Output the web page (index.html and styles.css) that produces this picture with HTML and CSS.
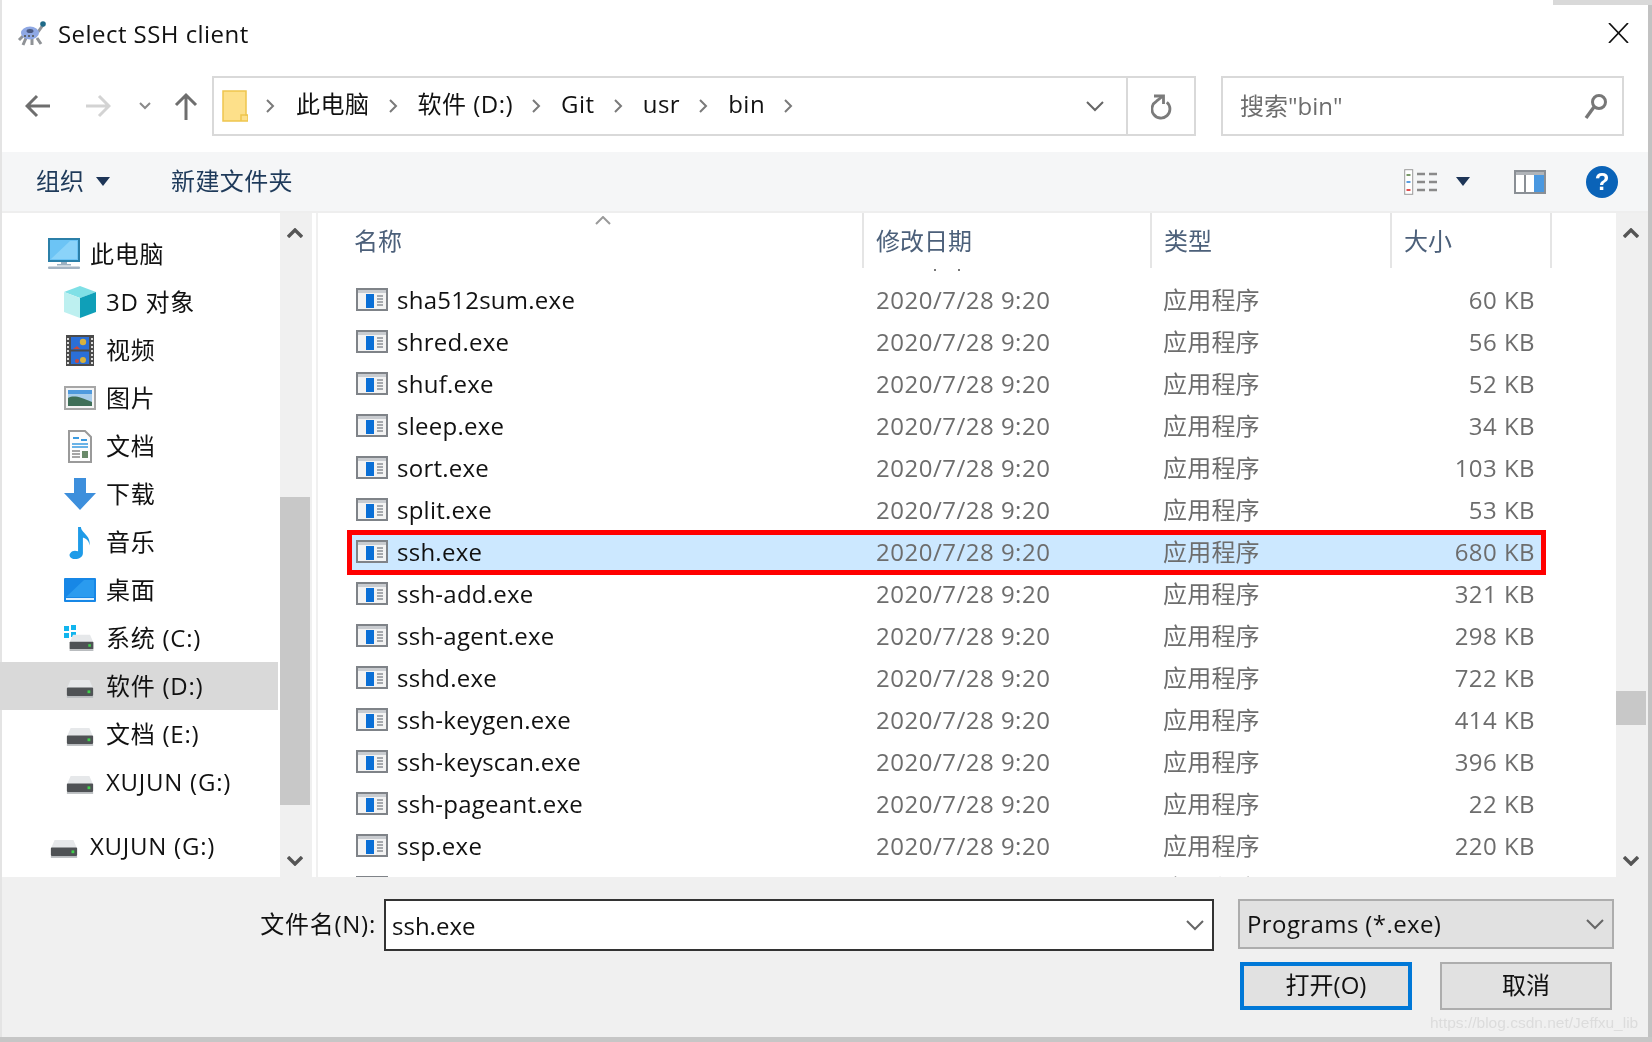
FILE: index.html
```html
<!DOCTYPE html>
<html lang="zh-CN">
<head>
<meta charset="utf-8">
<title>Select SSH client</title>
<link rel="stylesheet" href="styles.css">
</head>
<body>
<svg class="sprite" aria-hidden="true">
  <symbol id="i-exe" viewBox="0 0 32 23">
    <rect x="1" y="1" width="30" height="21" fill="#f3f3f3" stroke="#7f8388" stroke-width="2"/>
    <rect x="2" y="2" width="28" height="3" fill="#c9ccd0"/>
    <rect x="10" y="6" width="8" height="14" fill="#0a6fd6"/>
    <path d="M21 8h6M21 11h6M21 14h6M21 17h6" stroke="#8d9197" stroke-width="1.6"/>
  </symbol>
  <symbol id="i-drive" viewBox="0 0 32 20">
    <path d="M6 1h20l4 9H2z" fill="#e6e8ea"/>
    <rect x="2" y="9" width="28" height="9" rx="1" fill="#4f5255"/>
    <rect x="2" y="18" width="28" height="2" fill="#b9bcbf"/>
    <rect x="24" y="12" width="3" height="3" fill="#3fd24b"/>
  </symbol>
  <symbol id="i-chev" viewBox="0 0 10 16">
    <path d="M2 2l6 6-6 6" fill="none" stroke="#7a7a7a" stroke-width="2"/>
  </symbol>
  <symbol id="i-down" viewBox="0 0 20 12">
    <path d="M2 2l8 8 8-8" fill="none" stroke="#666" stroke-width="2"/>
  </symbol>
  <symbol id="i-caret" viewBox="0 0 14 9">
    <path d="M0 0h14l-7 9z" fill="#1d3557"/>
  </symbol>
  <symbol id="i-sb" viewBox="0 0 16 10">
    <path d="M1 9l7-7 7 7" fill="none" stroke="#555" stroke-width="3.4"/>
  </symbol>
</svg>

<div class="window">
  <header class="titlebar">
    <svg class="app-icon" viewBox="0 0 30 26">
      <path d="M6 16L2 20M9 18l-3 7M15 19v6M20 18l4 6M21 12l5-7" stroke="#8f9296" stroke-width="3" fill="none"/>
      <ellipse cx="13" cy="13" rx="9" ry="6.500" fill="#8fa8e4"/>
      <path d="M7 16h12" stroke="#5f6670" stroke-width="2" stroke-dasharray="2 2"/>
      <ellipse cx="13" cy="11" rx="3.500" ry="2" fill="#4b5a80"/>
      <circle cx="26" cy="4" r="2.800" fill="#1e6a88"/>
    </svg>
    <span class="title">Select SSH client</span>
    <svg class="close" viewBox="0 0 21 20"><path d="M1 0l19 20M20 0L1 20" stroke="#111" stroke-width="1.7"/></svg>
  </header>

  <div class="addressrow">
    <div class="navbtns">
      <svg class="nb nb-back" viewBox="0 0 26 24"><path d="M25 12H3M12 2L2 12l10 10" fill="none" stroke="#6e6e6e" stroke-width="3"/></svg>
      <svg class="nb nb-fwd" viewBox="0 0 26 24"><path d="M1 12h22M14 2l10 10-10 10" fill="none" stroke="#d3d3d3" stroke-width="3"/></svg>
      <svg class="nb nb-drop" viewBox="0 0 14 10"><path d="M2 2l5 5 5-5" fill="none" stroke="#8a8a8a" stroke-width="2"/></svg>
      <svg class="nb nb-up" viewBox="0 0 24 28"><path d="M12 28V3M2 13L12 3l10 10" fill="none" stroke="#6e6e6e" stroke-width="3"/></svg>
    </div>
    <div class="address">
      <svg class="folder" viewBox="0 0 26 32"><path d="M1 1h23v24h2v6H1z" fill="#fde08a" stroke="#eec54e" stroke-width="1.5"/><path d="M19 31v-6h6" fill="none" stroke="#eec54e" stroke-width="1.5"/></svg>
      <ol class="crumbs">
        <li class="crumb"><svg class="chev"><use href="#i-chev"/></svg></li>
        <li class="crumb"><span>此电脑</span><svg class="chev"><use href="#i-chev"/></svg></li>
        <li class="crumb"><span>软件 (D:)</span><svg class="chev"><use href="#i-chev"/></svg></li>
        <li class="crumb"><span>Git</span><svg class="chev"><use href="#i-chev"/></svg></li>
        <li class="crumb"><span>usr</span><svg class="chev"><use href="#i-chev"/></svg></li>
        <li class="crumb"><span>bin</span><svg class="chev"><use href="#i-chev"/></svg></li>
      </ol>
      <svg class="addr-drop"><use href="#i-down"/></svg>
      <div class="refresh">
        <svg viewBox="0 0 22 28"><path d="M15.800 10.200A9 9 0 1 1 5.500 9.200L12 4" fill="none" stroke="#7b7b7b" stroke-width="2.800"/><path d="M3 4h9.500v8" fill="none" stroke="#7b7b7b" stroke-width="2.800"/></svg>
      </div>
    </div>
    <div class="search">
      <span>搜索"bin"</span>
      <svg viewBox="0 0 24 26"><circle cx="15" cy="9" r="6.500" fill="none" stroke="#777" stroke-width="3"/><path d="M10 14L2 25" stroke="#777" stroke-width="3.400"/></svg>
    </div>
  </div>

  <div class="toolbar">
    <span class="tool">组织<svg class="caret"><use href="#i-caret"/></svg></span>
    <span class="tool tool-new">新建文件夹</span>
    <span class="spacer"></span>
    <svg class="view-icon" viewBox="0 0 33 26">
      <rect x=".7" y=".7" width="8" height="24.600" fill="#fff" stroke="#9a9a9a"/>
      <path d="M2.500 6h4" stroke="#7a9a6a" stroke-width="2"/><path d="M2.500 13h4" stroke="#5a9ee0" stroke-width="2"/><path d="M2.500 21h4" stroke="#e05050" stroke-width="2"/>
      <path d="M13 5h8M25 5h8M13 13h8M25 13h8M13 21h8M25 21h8" stroke="#8a8a8a" stroke-width="2.400"/>
    </svg>
    <svg class="caret caret-view"><use href="#i-caret"/></svg>
    <svg class="pane-icon" viewBox="0 0 32 24">
      <rect x="1" y="1" width="30" height="22" fill="#fff" stroke="#8a8f95" stroke-width="2"/>
      <rect x="20" y="4" width="10" height="18" fill="#4a98e0"/>
      <rect x="10" y="2" width="2" height="20" fill="#8a8f95"/>
      <rect x="2" y="2" width="28" height="3" fill="#b0b4b9"/>
    </svg>
    <span class="help">?</span>
  </div>

  <div class="browser">
    <nav class="navpane">
      <div class="navscroll">
        <ul class="navlist">
          <li class="navitem top"><svg class="nav-icon" viewBox="0 0 32 30"><rect x="1" y="0" width="30" height="22" fill="#6cc4f5" stroke="#2b7fa8" stroke-width="2"/><path d="M3 20L22 2h7v18z" fill="#8ad3f9"/><rect x="13" y="23" width="6" height="2" fill="#9bb0c0"/><rect x="9" y="25" width="14" height="1.500" fill="#9bb0c0"/><rect x="0" y="27.500" width="32" height="2.500" rx="1" fill="#a3b3c2"/></svg><span>此电脑</span></li>
          <li class="navitem"><svg class="nav-icon" viewBox="0 0 32 32"><path d="M16 0l16 6-16 6L0 6z" fill="#7fe0e6"/><path d="M0 6l16 6v20L0 26z" fill="#bdf0f0"/><path d="M32 6l-16 6v20l16-6z" fill="#0f9fb8"/></svg><span>3D 对象</span></li>
          <li class="navitem"><svg class="nav-icon nav-video" viewBox="0 0 28 31"><rect width="28" height="31" fill="#4b4b4b"/><rect x="5" y="2" width="18" height="12.500" fill="#2a6fd8"/><rect x="5" y="16.500" width="18" height="12.500" fill="#2a6fd8"/><path d="M2 3v26M26 3v26" stroke="#ddd" stroke-width="2" stroke-dasharray="2 2"/><circle cx="17" cy="7" r="3.200" fill="#d8b23c"/><path d="M7 14l4-3 3 3z" fill="#c94a3a"/><circle cx="17" cy="25" r="3" fill="#d8b23c"/><circle cx="11" cy="26" r="2" fill="#c94a3a"/></svg><span>视频</span></li>
          <li class="navitem"><svg class="nav-icon" viewBox="0 0 32 24"><rect x="1" y="1" width="30" height="22" fill="#f5f5f5" stroke="#a6a6a6" stroke-width="2"/><rect x="4" y="4" width="24" height="16" fill="#a9cdea"/><rect x="4" y="4" width="24" height="4" fill="#4f9ade"/><path d="M4 12c6-3 12-1 24 4v4H4z" fill="#3f6f58"/></svg><span>图片</span></li>
          <li class="navitem"><svg class="nav-icon nav-doc" viewBox="0 0 24 33"><path d="M1 1h16l6 6v25H1z" fill="#fdfdfd" stroke="#9a9a9a" stroke-width="2"/><path d="M5 8h6M13 10h6" stroke="#3a9ae0" stroke-width="2"/><path d="M4 14h16M4 17h16" stroke="#3a9ae0" stroke-width="1.500"/><path d="M4 21h8M4 24h8M4 27h8" stroke="#888" stroke-width="1.500"/><rect x="14" y="21" width="6" height="7" fill="#6a8a6a"/></svg><span>文档</span></li>
          <li class="navitem"><svg class="nav-icon" viewBox="0 0 32 32"><path d="M10 0h12v15h10L16 32 0 15h10z" fill="#3d8fdc"/></svg><span>下载</span></li>
          <li class="navitem"><svg class="nav-icon nav-doc" viewBox="0 0 24 34"><path d="M13 1c0 6 10 8 9 19-1-6-5-8-7-8v16c0 4-4 6-8 6-5 0-7-4-5-6 2-3 5-3 8-2V1z" fill="#1e9be8"/></svg><span>音乐</span></li>
          <li class="navitem"><svg class="nav-icon" viewBox="0 0 32 24"><rect width="32" height="24" rx="1" fill="#1787e6"/><path d="M2 19L20 2h10v17z" fill="#2a9bef"/><rect x="2" y="20" width="28" height="2" fill="#dff0fd"/></svg><span>桌面</span></li>
          <li class="navitem"><svg class="nav-icon nav-sys" viewBox="0 0 32 26"><path d="M0 1h5v5H0zM7 0h5v5H7zM0 8h5v5H0zM7 7h5v5H7z" fill="#12b5ee"/><use href="#i-drive" x="3" y="9" width="29" height="17"/></svg><span>系统 (C:)</span></li>
          <li class="navitem selected"><svg class="nav-icon nav-drive"><use href="#i-drive"/></svg><span>软件 (D:)</span></li>
          <li class="navitem"><svg class="nav-icon nav-drive"><use href="#i-drive"/></svg><span>文档 (E:)</span></li>
          <li class="navitem"><svg class="nav-icon nav-drive"><use href="#i-drive"/></svg><span>XUJUN (G:)</span></li>
          <li class="navitem top gapped"><svg class="nav-icon nav-drive"><use href="#i-drive"/></svg><span>XUJUN (G:)</span></li>
        </ul>
      </div>
      <div class="scrollbar nav-sb">
        <svg class="sb-arrow"><use href="#i-sb"/></svg>
        <div class="sb-thumb"></div>
        <svg class="sb-arrow sb-down"><use href="#i-sb"/></svg>
      </div>
    </nav>

    <section class="files">
      <div class="filemain">
        <div class="columns">
          <div class="col col-name"><span>名称</span><svg class="sort" viewBox="0 0 16 9"><path d="M1 8l7-7 7 7" fill="none" stroke="#9a9a9a" stroke-width="2"/></svg></div>
          <div class="col col-date">修改日期</div>
          <div class="col col-type">类型</div>
          <div class="col col-size">大小</div>
        </div>
        <div class="rows" id="rows">
          <div class="row"><span class="name"><svg class="exe"><use href="#i-exe"/></svg>sha512sum.exe</span><span class="date">2020/7/28 9:20</span><span class="type">应用程序</span><span class="size">60 KB</span></div>
          <div class="row"><span class="name"><svg class="exe"><use href="#i-exe"/></svg>shred.exe</span><span class="date">2020/7/28 9:20</span><span class="type">应用程序</span><span class="size">56 KB</span></div>
          <div class="row"><span class="name"><svg class="exe"><use href="#i-exe"/></svg>shuf.exe</span><span class="date">2020/7/28 9:20</span><span class="type">应用程序</span><span class="size">52 KB</span></div>
          <div class="row"><span class="name"><svg class="exe"><use href="#i-exe"/></svg>sleep.exe</span><span class="date">2020/7/28 9:20</span><span class="type">应用程序</span><span class="size">34 KB</span></div>
          <div class="row"><span class="name"><svg class="exe"><use href="#i-exe"/></svg>sort.exe</span><span class="date">2020/7/28 9:20</span><span class="type">应用程序</span><span class="size">103 KB</span></div>
          <div class="row"><span class="name"><svg class="exe"><use href="#i-exe"/></svg>split.exe</span><span class="date">2020/7/28 9:20</span><span class="type">应用程序</span><span class="size">53 KB</span></div>
          <div class="row current"><span class="name"><svg class="exe"><use href="#i-exe"/></svg>ssh.exe</span><span class="date">2020/7/28 9:20</span><span class="type">应用程序</span><span class="size">680 KB</span></div>
          <div class="row"><span class="name"><svg class="exe"><use href="#i-exe"/></svg>ssh-add.exe</span><span class="date">2020/7/28 9:20</span><span class="type">应用程序</span><span class="size">321 KB</span></div>
          <div class="row"><span class="name"><svg class="exe"><use href="#i-exe"/></svg>ssh-agent.exe</span><span class="date">2020/7/28 9:20</span><span class="type">应用程序</span><span class="size">298 KB</span></div>
          <div class="row"><span class="name"><svg class="exe"><use href="#i-exe"/></svg>sshd.exe</span><span class="date">2020/7/28 9:20</span><span class="type">应用程序</span><span class="size">722 KB</span></div>
          <div class="row"><span class="name"><svg class="exe"><use href="#i-exe"/></svg>ssh-keygen.exe</span><span class="date">2020/7/28 9:20</span><span class="type">应用程序</span><span class="size">414 KB</span></div>
          <div class="row"><span class="name"><svg class="exe"><use href="#i-exe"/></svg>ssh-keyscan.exe</span><span class="date">2020/7/28 9:20</span><span class="type">应用程序</span><span class="size">396 KB</span></div>
          <div class="row"><span class="name"><svg class="exe"><use href="#i-exe"/></svg>ssh-pageant.exe</span><span class="date">2020/7/28 9:20</span><span class="type">应用程序</span><span class="size">22 KB</span></div>
          <div class="row"><span class="name"><svg class="exe"><use href="#i-exe"/></svg>ssp.exe</span><span class="date">2020/7/28 9:20</span><span class="type">应用程序</span><span class="size">220 KB</span></div>
          <div class="row"><span class="name"><svg class="exe"><use href="#i-exe"/></svg>stat.exe</span><span class="date">2020/7/28 9:20</span><span class="type">应用程序</span><span class="size">64 KB</span></div>
        </div>
      </div>
      <div class="scrollbar file-sb">
        <svg class="sb-arrow"><use href="#i-sb"/></svg>
        <div class="sb-thumb"></div>
        <svg class="sb-arrow sb-down"><use href="#i-sb"/></svg>
      </div>
    </section>
  </div>

  <footer class="footer">
    <div class="footrow">
      <label class="fn-label">文件名(N):</label>
      <div class="fn-input"><span>ssh.exe</span><svg class="combo-chev"><use href="#i-down"/></svg></div>
      <div class="fn-type"><span>Programs (*.exe)</span><svg class="combo-chev"><use href="#i-down"/></svg></div>
    </div>
    <div class="footrow buttons">
      <button class="btn default"><span>打开(O)</span></button>
      <button class="btn"><span>取消</span></button>
    </div>
    <span class="watermark">https://blog.csdn.net/Jeffxu_lib</span>
  </footer>
</div>
</body>
</html>
```

FILE: styles.css
```css
* { box-sizing: border-box; }
html, body { margin: 0; padding: 0; }
body {
  width: 1652px; height: 1042px; overflow: hidden; background: #fff;
  font-family: "Open Sans", "Noto Sans CJK SC", sans-serif;
  font-size: 24px; color: #111;
}
.sprite { position: absolute; width: 0; height: 0; }
ul, ol { list-style: none; margin: 0; padding: 0; }

.window {
  position: relative;
  width: 1652px; height: 1042px; display: flex; flex-direction: column;
  border-left: 2px solid #e4e4e4; border-right: 4px solid #c2c2c2;
  background: #fff;
  filter: blur(.45px);
}
.window::before {
  content: ""; position: absolute; top: 0; right: -4px; width: 99px; height: 5px; background: #d9d9d9;
}
.window::after {
  content: ""; position: absolute; left: -2px; right: -4px; bottom: 0; height: 5px; background: #c6c6c6;
}

.titlebar { height: 76px; display: flex; align-items: flex-start; padding: 20px 19px 0 15px; }
.app-icon { width: 30px; height: 26px; }
.title { margin-left: 11px; line-height: 28px; font-size: 24px; letter-spacing: .45px; }
.close { width: 21px; height: 20px; margin-left: auto; margin-top: 3px; }

.addressrow { height: 60px; margin-bottom: 16px; display: flex; padding-right: 23px; }
.navbtns { width: 210px; position: relative; display: flex; align-items: center; }
.nb { flex: none; }
.nb-back { width: 26px; height: 24px; margin-left: 23px; }
.nb-fwd { width: 26px; height: 24px; margin-left: 34px; }
.nb-drop { width: 14px; height: 10px; margin-left: 27px; }
.nb-up { width: 24px; height: 28px; margin-left: 22px; }

.address {
  width: 984px; height: 60px; border: 2px solid #d9d9d9; display: flex; align-items: center;
}
.folder { width: 26px; height: 32px; margin-left: 8px; flex: none; }
.crumbs { display: flex; align-items: center; letter-spacing: .5px; }
.crumb { display: flex; align-items: center; }
.crumb span { line-height: 30px; margin-top: -4px; }
.crumb:first-child .chev { margin-left: 17px; margin-right: 21px; }
.chev { width: 10px; height: 16px; margin-left: 18px; margin-right: 20px; flex: none; }
.addr-drop { width: 20px; height: 12px; margin-left: auto; margin-right: 21px; flex: none; }
.refresh {
  width: 68px; height: 56px; border-left: 2px solid #d9d9d9; display: flex; align-items: center; justify-content: center; flex: none;
  padding-left: 2px;
}
.refresh svg { width: 22px; height: 28px; }
.search {
  width: 403px; height: 60px; margin-left: 25px; border: 2px solid #d9d9d9;
  display: flex; align-items: center; justify-content: space-between; padding: 0 14px 0 17px; color: #6d6d6d;
}
.search span { margin-top: -4px; }
.search svg { width: 24px; height: 26px; }

.toolbar {
  height: 61px; background: #f5f6f7; border-bottom: 2px solid #eeeeee;
  display: flex; align-items: center; padding: 0 30px 0 34px; color: #1e3a5a;
}
.tool { display: inline-flex; align-items: center; line-height: 30px; padding-bottom: 2px; }
.caret { width: 14px; height: 9px; margin-left: 12px; }
.tool .caret { margin-top: 2px; }
.tool-new { margin-left: 61px; letter-spacing: .4px; }
.spacer { flex: 1; }
.view-icon { width: 33px; height: 26px; }
.caret-view { margin-left: 19px; }
.pane-icon { width: 32px; height: 24px; margin-left: 44px; }
.help {
  width: 32px; height: 32px; margin-left: 40px; border-radius: 50%; background: #0a63b8; color: #fff;
  font: 700 24px/32px "Liberation Sans", sans-serif; text-align: center;
}

.browser { height: 664px; display: flex; flex: none; }
.navpane { width: 314px; display: flex; flex: none; }
.navscroll { width: 278px; margin-left: -2px; margin-right: 2px; padding-top: 17px; }
.navitem {
  height: 48px; display: flex; align-items: center; padding-left: 64px; line-height: 48px; color: #111;
  letter-spacing: .75px;
}
.navitem.top { padding-left: 48px; }
.navitem.gapped { margin-top: 16px; }
.navitem.selected { background: #d9d9d9; }
.nav-icon { width: 32px; height: 32px; margin-right: 10px; flex: none; }
.nav-video { width: 28px; height: 31px; margin: 0 12px 0 2px; }
.nav-doc { width: 24px; height: 33px; margin: 0 14px 0 4px; }
.nav-sys { width: 32px; height: 26px; }
.nav-drive { width: 30px; height: 19px; margin: 5px 11px 0 1px; }

.scrollbar {
  width: 32px; background: #f0f0f0; display: flex; flex-direction: column; align-items: center; flex: none;
  padding-right: 2px;
}
.sb-arrow { width: 16px; height: 10px; margin-top: 15px; flex: none; }
.sb-thumb { background: #c8c8c8; width: 30px; flex: none; }
.sb-down { transform: rotate(180deg); margin-top: auto; margin-bottom: 11px; }
.nav-sb .sb-thumb { height: 308px; margin-top: 259px; }
.file-sb .sb-thumb { height: 34px; margin-top: 453px; }

.files { width: 1332px; display: flex; flex: none; border-left: 2px solid #f0f0f0; }
.filemain { width: 1298px; min-width: 0; display: flex; flex-direction: column; }
.columns { height: 55px; display: flex; flex: none; color: #4c607a; line-height: 56px; }
.col { border-right: 2px solid #e5e5e5; flex: none; position: relative; }
.col-name { width: 546px; padding-left: 36px; }
.col-date { width: 288px; padding-left: 12px; }
.col-type { width: 240px; padding-left: 12px; }
.col-size { width: 160px; padding-left: 12px; }
.sort { position: absolute; left: 277px; top: 3px; width: 16px; height: 9px; }

.rows { position: relative; flex: 1; min-height: 0; overflow: hidden; margin-left: 29px; padding-top: 11px; }
.rows::before {
  content: ""; position: absolute; left: 587px; top: 1px; width: 2px; height: 2px; background: #777; box-shadow: 24px 0 #777;
}
.row {
  position: relative; height: 42px; display: grid;
  grid-template-columns: 520px 287px 240px 132px; align-items: center;
  width: 1199px; padding: 0 11px 0 9px; line-height: 42px; color: #6d6d6d;
}
.name { color: #111; display: flex; align-items: center; letter-spacing: .25px; }
.date { letter-spacing: .5px; }
.size { text-align: right; letter-spacing: .45px; }
.type { letter-spacing: .2px; }
.exe { width: 32px; height: 23px; margin-right: 9px; margin-bottom: 2px; flex: none; }
.current { background: #cce8ff; }
.current::after {
  content: ""; position: absolute; inset: -1px 0 -2px 0; border: 5px solid #f00;
}

.footer {
  position: relative; height: 160px; background: #f0f0f0; flex: none;
  padding-top: 22px;
}
.footrow { display: flex; }
.fn-label { width: 374px; text-align: right; line-height: 50px; letter-spacing: .75px; }
.fn-input {
  width: 830px; height: 52px; margin-left: 8px; background: #fff; border: 2px solid #333;
  display: flex; align-items: center; justify-content: space-between; padding: 0 7px 0 6px;
}
.fn-input span { margin-top: 1px; }
.fn-type {
  width: 376px; height: 50px; margin-left: 24px; background: #e1e1e1; border: 2px solid #adadad;
  display: flex; align-items: center; justify-content: space-between; padding: 0 7px 0 7px; letter-spacing: .4px;
}
.fn-type span { margin-top: -2px; }
.combo-chev { width: 20px; height: 12px; flex: none; }
.buttons { margin-top: 11px; padding-left: 1238px; }
.btn {
  width: 172px; height: 48px; background: #e1e1e1; border: 2px solid #adadad; font: inherit; color: #111; padding: 0 0 5px;
  margin-right: 28px;
}
.btn.default { border: 4px solid #0078d7; }
.watermark {
  position: absolute; left: 1428px; top: 135px;
  font: 15.5px/22px "Liberation Sans", sans-serif; color: #dcdcdc; white-space: nowrap;
}
```
